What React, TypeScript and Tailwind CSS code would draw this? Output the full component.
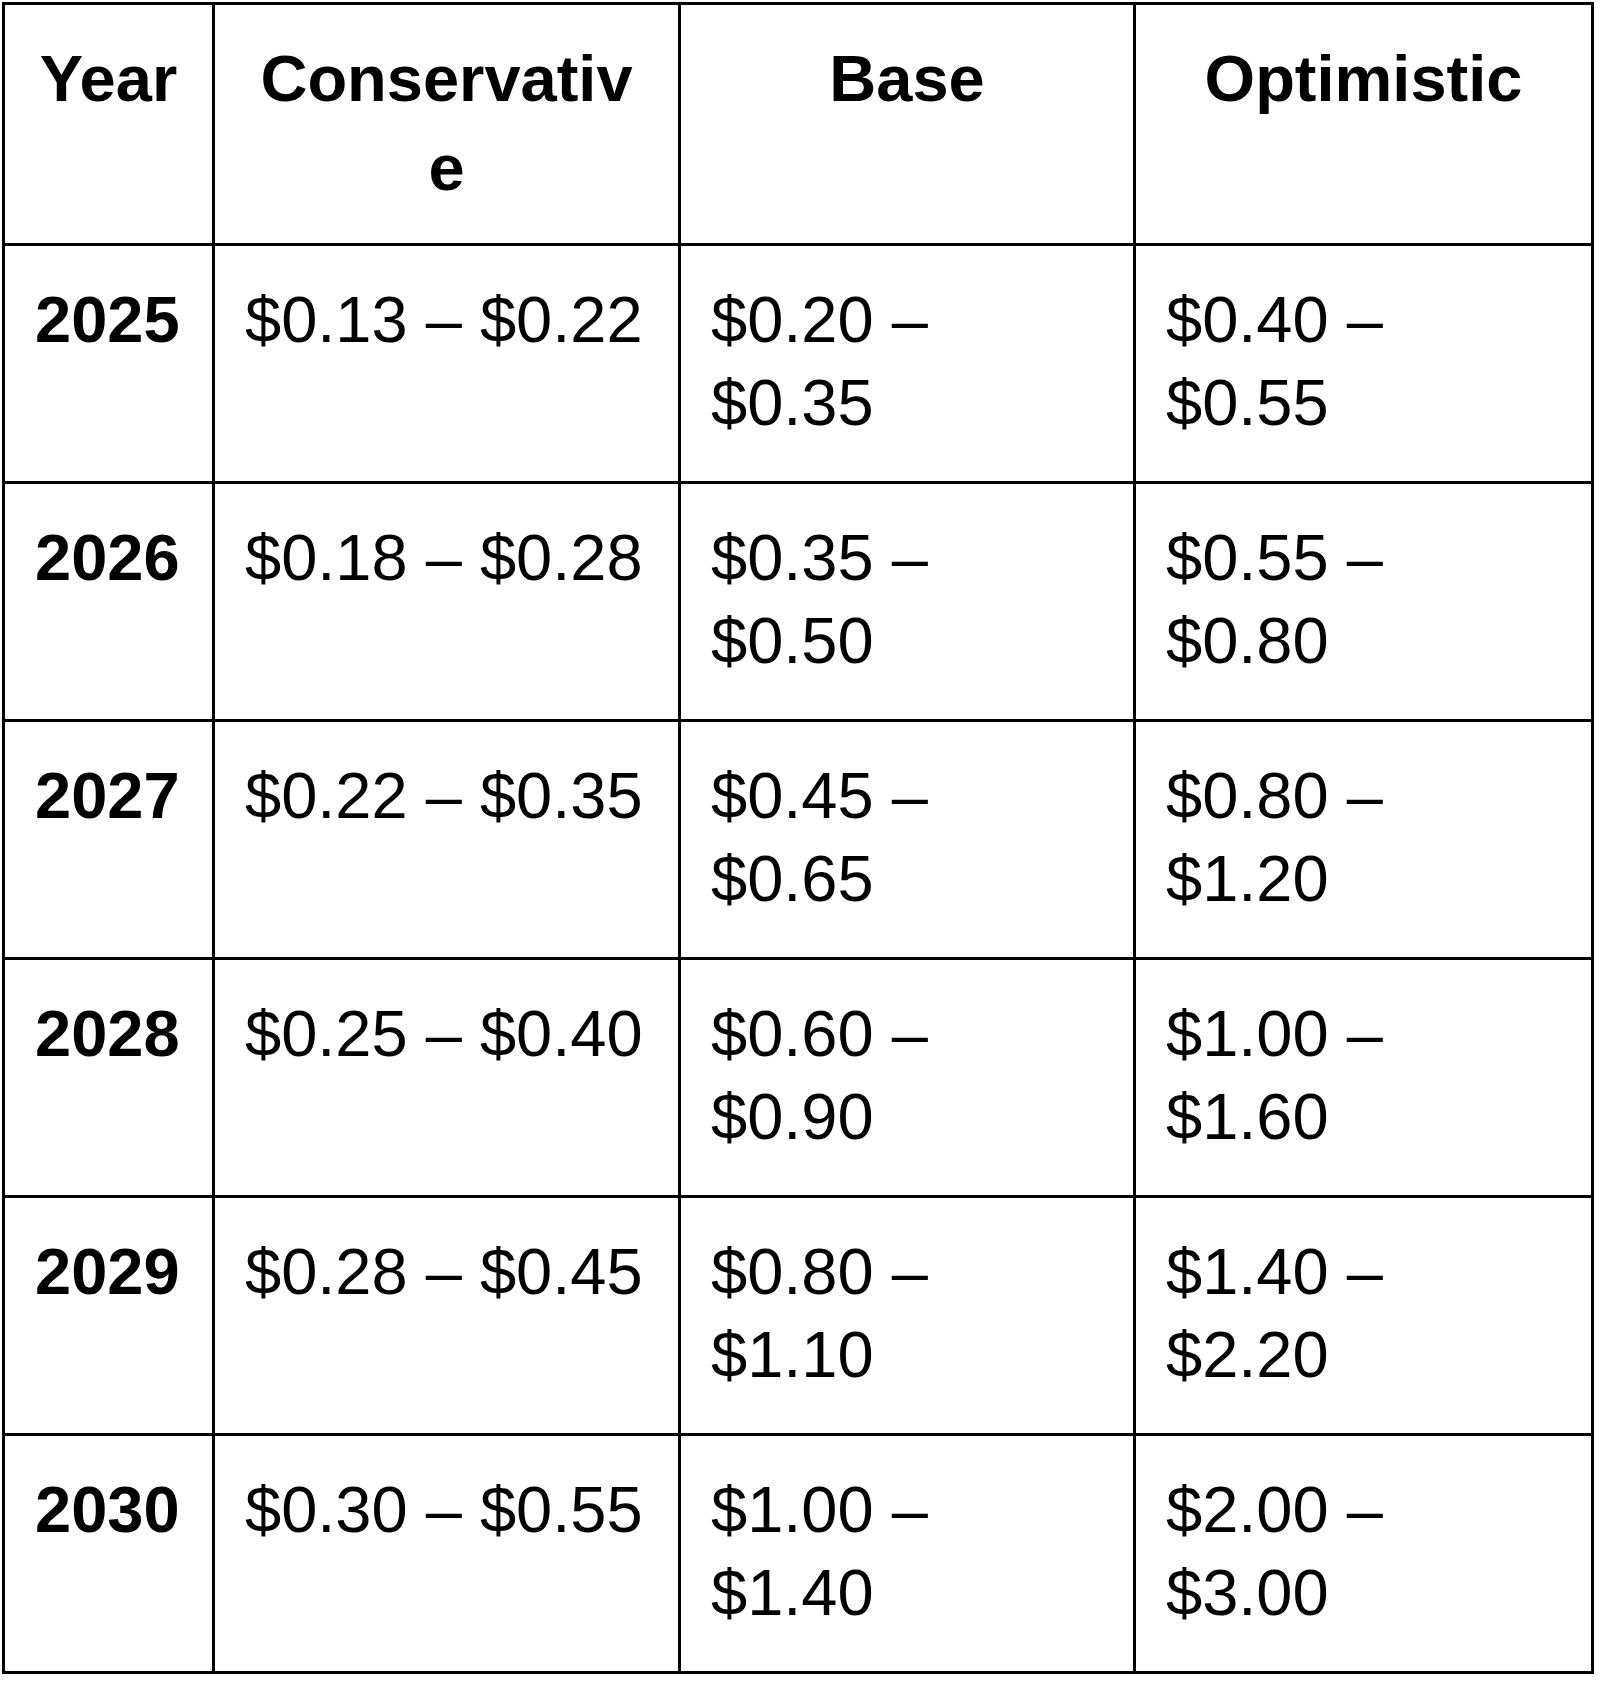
import React from "react";

const rows: [string, string, string, string, string, string][] = [
  ["2025", "$0.13 – $0.22", "$0.20 –", "$0.35", "$0.40 –", "$0.55"],
  ["2026", "$0.18 – $0.28", "$0.35 –", "$0.50", "$0.55 –", "$0.80"],
  ["2027", "$0.22 – $0.35", "$0.45 –", "$0.65", "$0.80 –", "$1.20"],
  ["2028", "$0.25 – $0.40", "$0.60 –", "$0.90", "$1.00 –", "$1.60"],
  ["2029", "$0.28 – $0.45", "$0.80 –", "$1.10", "$1.40 –", "$2.20"],
  ["2030", "$0.30 – $0.55", "$1.00 –", "$1.40", "$2.00 –", "$3.00"],
];

const cell = "border-t-[3px] border-l-[3px] border-black px-[30px] pt-[32px]";
const head = "border-t-[3px] border-l-[3px] border-black pt-[29px] leading-[89px] font-bold text-center";

export default function App() {
  return (
    <div className="bg-white min-h-[1682px] pt-[2px] pl-[2px] text-black font-['Liberation_Sans',Arial,sans-serif] text-[65px] leading-[83px]">
      <div className="grid w-[1592px] grid-cols-[210px_466px_455px_458px] grid-rows-[241px_repeat(6,238px)] border-r-[3px] border-b-[3px] border-black">
        <div className={head}>Year</div>
        <div className={head}>
          Conservativ
          <br />e
        </div>
        <div className={`${head} px-[30px]`}>Base</div>
        <div className={`${head} px-[30px]`}>Optimistic</div>
        {rows.map((r) => (
          <React.Fragment key={r[0]}>
            <div className={`${cell} font-bold whitespace-nowrap`}>{r[0]}</div>
            <div className={`${cell} whitespace-nowrap`}>{r[1]}</div>
            <div className={`${cell} whitespace-nowrap`}>
              {r[2]}
              <br />
              {r[3]}
            </div>
            <div className={`${cell} whitespace-nowrap`}>
              {r[4]}
              <br />
              {r[5]}
            </div>
          </React.Fragment>
        ))}
      </div>
    </div>
  );
}
